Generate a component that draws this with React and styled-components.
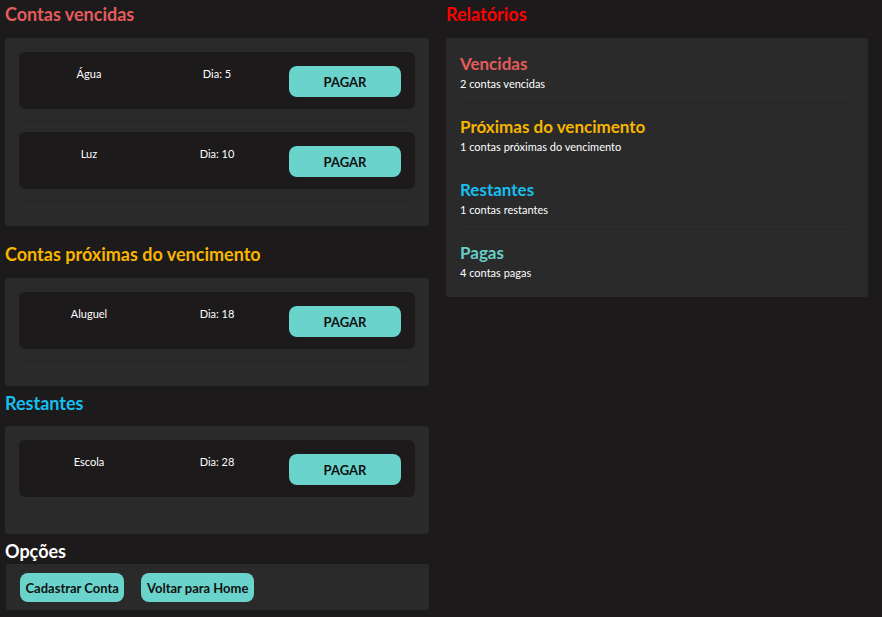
import React from "react";
import styled, { createGlobalStyle } from "styled-components";

const GlobalStyle = createGlobalStyle`
    body {
        margin: 0;
        background-color: #1c1a1b;
        font-family: Lato, "Noto Sans", sans-serif;
        color: #ffffff;
    }
`;

const Page = styled.div`
    display: grid;
    grid-template-columns: 424px 422px;
    column-gap: 17px;
    align-items: start;
    padding: 0 0 0 5px;
    min-height: 617px;
`;

const Column = styled.div`
    display: flex;
    flex-direction: column;
`;

const Title = styled.h3`
    margin: ${(p) => p.$mt || 2}px 0 ${(p) => (p.$mb === undefined ? 12 : p.$mb)}px;
    font-size: 18px;
    line-height: 24px;
    font-weight: 700;
    color: ${(p) => p.$color};
`;

const Panel = styled.div`
    background-color: #2a2a2a;
    border-radius: 3px;
    padding: 14px;
`;

const Card = styled.div`
    display: grid;
    grid-template-columns: 1fr 1fr 1fr;
    column-gap: 16px;
    align-items: start;
    background-color: #1c1a1b;
    border-radius: 6px;
    padding: 14px 14px 12px;
    font-size: 11px;
    line-height: 15px;
`;

const Cell = styled.span`
    text-align: center;
`;

const PayButton = styled.button`
    height: 31px;
    border: none;
    border-radius: 8px;
    background-color: #6ad3cb;
    color: #111;
    font-family: inherit;
    font-size: 13px;
    font-weight: 700;
    cursor: pointer;
`;

const Divider = styled.div`
    height: 1px;
    background-color: #262626;
    margin: 11px 0;
`;

const OptionsPanel = styled.div`
    display: flex;
    gap: 17px;
    background-color: #2a2a2a;
    border-radius: 3px;
    margin-left: 1px;
    padding: 9px 14px 8px;
`;

const OptionButton = styled.button`
    height: 29px;
    padding: 0 5.5px;
    border: none;
    border-radius: 8px;
    background-color: #6ad3cb;
    color: #111;
    font-family: inherit;
    font-size: 13px;
    font-weight: 700;
    cursor: pointer;
`;

const ReportPanel = styled.div`
    background-color: #2a2a2a;
    border-radius: 3px;
    padding: 3px 14px 5px;
`;

const ReportItem = styled.div`
    padding: 13px 0 11px;
    border-bottom: 1px solid #262626;
    &:last-child {
        border-bottom: none;
    }
`;

const ReportTitle = styled.div`
    font-size: 17px;
    line-height: 20px;
    font-weight: 700;
    color: ${(p) => p.$color};
`;

const ReportText = styled.div`
    margin-top: 2px;
    font-size: 11px;
    line-height: 16px;
`;

const sections = [
    {
        title: "Contas vencidas",
        color: "#e25c5c",
        mt: 2,
        mb: 12,
        bills: [
            { name: "Água", day: 5 },
            { name: "Luz", day: 10 },
        ],
    },
    {
        title: "Contas próximas do vencimento",
        color: "#f7b500",
        mt: 16,
        mb: 12,
        bills: [{ name: "Aluguel", day: 18 }],
    },
    {
        title: "Restantes",
        color: "#17bfef",
        mt: 5,
        mb: 11,
        bills: [{ name: "Escola", day: 28 }],
    },
];

const reports = [
    { title: "Vencidas", color: "#e25c5c", text: "2 contas vencidas" },
    { title: "Próximas do vencimento", color: "#f7b500", text: "1 contas próximas do vencimento" },
    { title: "Restantes", color: "#17bfef", text: "1 contas restantes" },
    { title: "Pagas", color: "#67cfc6", text: "4 contas pagas" },
];

const App = () => {
    return (
        <>
            <GlobalStyle />
            <Page>
                <Column>
                    {sections.map((s) => (
                        <React.Fragment key={s.title}>
                            <Title $color={s.color} $mt={s.mt} $mb={s.mb}>
                                {s.title}
                            </Title>
                            <Panel>
                                {s.bills.map((b) => (
                                    <div key={b.name}>
                                        <Card>
                                            <Cell>{b.name}</Cell>
                                            <Cell>Dia: {b.day}</Cell>
                                            <PayButton>PAGAR</PayButton>
                                        </Card>
                                        <Divider />
                                    </div>
                                ))}
                            </Panel>
                        </React.Fragment>
                    ))}
                    <Title $color="#ffffff" $mt={5} $mb={1}>
                        Opções
                    </Title>
                    <OptionsPanel>
                        <OptionButton>Cadastrar Conta</OptionButton>
                        <OptionButton>Voltar para Home</OptionButton>
                    </OptionsPanel>
                </Column>
                <Column>
                    <Title $color="#ff0000">Relatórios</Title>
                    <ReportPanel>
                        {reports.map((r) => (
                            <ReportItem key={r.title}>
                                <ReportTitle $color={r.color}>{r.title}</ReportTitle>
                                <ReportText>{r.text}</ReportText>
                            </ReportItem>
                        ))}
                    </ReportPanel>
                </Column>
            </Page>
        </>
    );
};

export default App;
